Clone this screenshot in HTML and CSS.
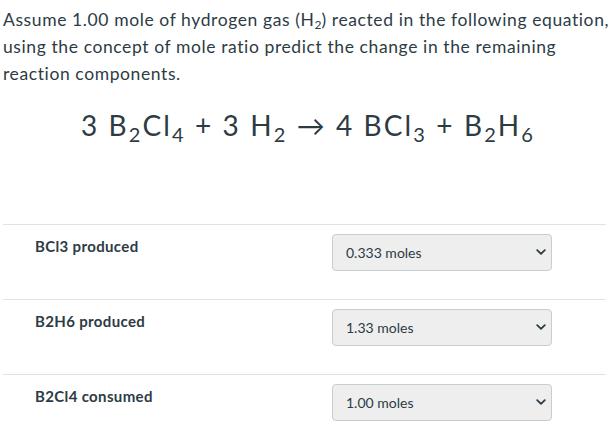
FILE: index.html
```html
<!DOCTYPE html>
<html>
<head>
<meta charset="utf-8">
<link rel="stylesheet" href="styles.css">
</head>
<body>
<div class="page">
  <p class="prompt">Assume 1.00 mole of hydrogen gas (H<sub>2</sub>) reacted in the following equation, using the concept of mole ratio predict the change in the remaining reaction components.</p>
  <div class="equation">3 B<sub>2</sub>Cl<sub>4</sub> + 3 H<sub>2</sub> &rarr; 4 BCl<sub>3</sub> + B<sub>2</sub>H<sub>6</sub></div>
  <div class="answers">
    <div class="row">
      <div class="label">BCl3 produced</div>
      <div class="select-wrap">
        <select class="select"><option>0.333 moles</option></select>
        <svg class="chev" width="10" height="6" viewBox="0 0 10 6"><path d="M1.2 1.2 L5 4.8 L8.8 1.2" fill="none" stroke="#2d3b45" stroke-width="1.8" stroke-linecap="round" stroke-linejoin="round"/></svg>
      </div>
    </div>
    <div class="row">
      <div class="label">B2H6 produced</div>
      <div class="select-wrap">
        <select class="select"><option>1.33 moles</option></select>
        <svg class="chev" width="10" height="6" viewBox="0 0 10 6"><path d="M1.2 1.2 L5 4.8 L8.8 1.2" fill="none" stroke="#2d3b45" stroke-width="1.8" stroke-linecap="round" stroke-linejoin="round"/></svg>
      </div>
    </div>
    <div class="row">
      <div class="label">B2Cl4 consumed</div>
      <div class="select-wrap">
        <select class="select"><option>1.00 moles</option></select>
        <svg class="chev" width="10" height="6" viewBox="0 0 10 6"><path d="M1.2 1.2 L5 4.8 L8.8 1.2" fill="none" stroke="#2d3b45" stroke-width="1.8" stroke-linecap="round" stroke-linejoin="round"/></svg>
      </div>
    </div>
  </div>
</div>
</body>
</html>
```
FILE: styles.css
```css
html, body {
  margin: 0;
  padding: 0;
  background: #ffffff;
}
body {
  font-family: Lato, "Open Sans", sans-serif;
  color: #2d3b45;
}
.page {
  width: 610px;
  padding: 6px 0 0 3px;
}
.prompt {
  margin: 0;
  font-size: 17.5px;
  letter-spacing: 0.6px;
  line-height: 27px;
}
.prompt sub {
  font-size: 12px;
  line-height: 0;
  letter-spacing: 0;
  vertical-align: -3px;
}
.equation {
  margin-top: 18px;
  font-size: 28px;
  letter-spacing: 2.1px;
  line-height: 40px;
  text-align: center;
  width: 610px;
}
.equation sub {
  font-size: 20px;
  line-height: 0;
  vertical-align: -6px;
}
.answers {
  margin-top: 79px;
  width: 603px;
}
.row {
  display: flex;
  align-items: flex-start;
  height: 74px;
  border-top: 1px solid #e0e2e4;
}
.label {
  width: 297px;
  padding: 11px 0 0 32px;
  font-size: 15px;
  letter-spacing: 0.35px;
  font-weight: bold;
  line-height: 20px;
}
.select-wrap {
  position: relative;
  margin-top: 9px;
}
.select {
  appearance: none;
  -webkit-appearance: none;
  display: block;
  box-sizing: border-box;
  width: 220px;
  height: 37px;
  margin: 0;
  padding: 0 24px 0 13px;
  font-family: Lato, "Open Sans", sans-serif;
  font-size: 14px;
  color: #2d3b45;
  background: #eeeeee;
  border: 1px solid #c7cdd1;
  border-radius: 4px;
}
.chev {
  position: absolute;
  right: 6px;
  top: 15px;
  pointer-events: none;
}
```
